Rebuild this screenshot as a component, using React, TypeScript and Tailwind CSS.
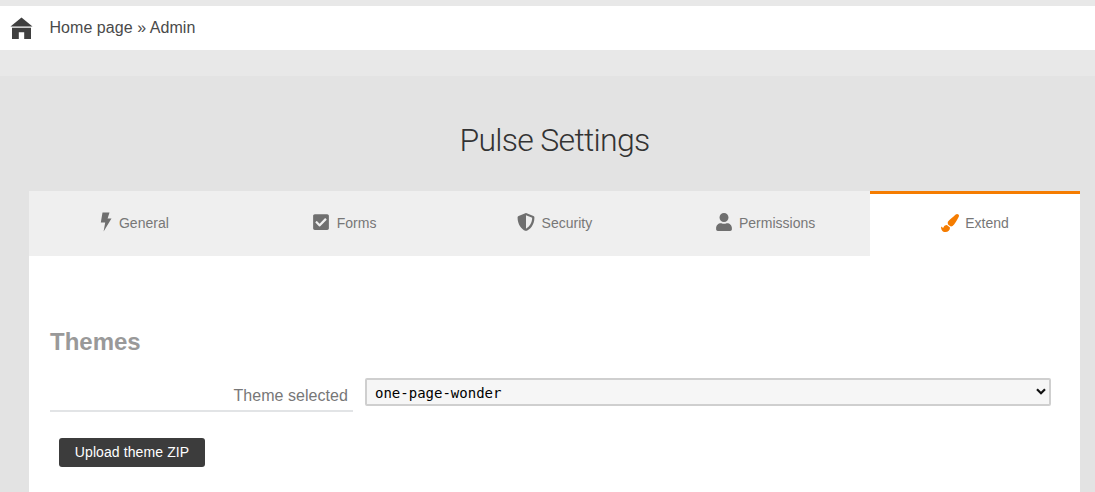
import React from "react";
import { FaCheckSquare, FaShieldAlt, FaUser, FaPaintBrush } from "react-icons/fa";

const Bolt = () => (
  <svg width="12" height="20" viewBox="0 0 12 20" className="mb-[4px] ml-[1px] text-[#6f6f6f]" fill="currentColor">
    <path d="M2.5 0.5H9.5L7.6 6.5H11.5L3.6 19.6L5.2 10.6H0.8Z" />
  </svg>
);

const tabs = [
  { label: "General", icon: <Bolt /> },
  { label: "Forms", icon: <FaCheckSquare className="mb-[4px] text-[18px] text-[#6f6f6f]" /> },
  { label: "Security", icon: <FaShieldAlt className="mb-[4px] text-[18px] text-[#6f6f6f]" /> },
  { label: "Permissions", icon: <FaUser className="mb-[4px] text-[18px] text-[#6f6f6f]" /> },
];

export default function App() {
  return (
    <div className="h-[492px] overflow-hidden bg-[#e8e8e8] text-[#777] font-['Liberation_Sans',Arial,sans-serif]">
      <div className="h-[6px]" />
      <div className="flex h-[44px] items-center bg-white pl-[10px]">
        <svg width="23" height="23" viewBox="0 0 23 23" fill="#3f3f3f" className="mt-[1px]">
          <path d="M11.5 0.5L22.5 9.5H0.5Z" />
          <path d="M2 10.8H21V22H14.2V15.2H8.8V22H2Z" />
        </svg>
        <span className="ml-[16.5px] text-[16px] tracking-[0.05px] text-[#4a4a4a]">Home page » Admin</span>
      </div>
      <div className="h-[26px]" />
      <div className="flex h-[416px] flex-col bg-[#e3e3e3] pl-[29px] pr-[15px]">
        <h1 className="flex h-[115px] items-center justify-center pt-[13px] font-['Roboto',sans-serif] text-[32px] font-light tracking-[-0.7px] text-[#333]">
          Pulse Settings
        </h1>
        <div className="flex h-[65px] w-[1051px] items-stretch bg-[#efefef]">
          {tabs.map((t) => (
            <div key={t.label} className="flex w-[210.25px] items-center justify-center gap-[6.5px] text-[14px] text-[#777]">
              {t.icon}
              <span>{t.label}</span>
            </div>
          ))}
          <div className="flex w-[210px] items-center justify-center gap-[6px] border-t-[3px] border-[#f57c00] bg-white pb-[3px] text-[14px] text-[#777]">
            <FaPaintBrush className="mb-[1px] text-[18px] text-[#f57c00]" />
            <span>Extend</span>
          </div>
        </div>
        <div className="w-[1051px] flex-1 bg-white pl-[21px] pr-[29px] pt-[72px]">
          <h2 className="text-[24px] font-bold leading-[28px] text-[#999]">Themes</h2>
          <div className="mt-[22px] flex items-start">
            <label className="flex h-[34px] w-[303px] items-center justify-end border-b-2 border-[#e2e4e6] pr-[5px] pt-[3px] text-[16px] tracking-[0.05px] text-[#777]">
              Theme selected
            </label>
            <div className="relative ml-[12px] flex-1">
              <select
                defaultValue="one-page-wonder"
                className="h-[28px] w-full appearance-none rounded-[2px] border-2 border-[#cfcfcf] bg-[#f6f6f6] pl-[8px] pt-[2px] font-['DejaVu_Sans_Mono',monospace] text-[14px] text-black"
              >
                <option>one-page-wonder</option>
              </select>
              <svg width="10" height="7" viewBox="0 0 10 7" className="pointer-events-none absolute right-[5px] top-[10px]" fill="none" stroke="#111" strokeWidth="2.2">
                <path d="M1 1.2L5 5.2L9 1.2" />
              </svg>
            </div>
          </div>
          <button className="ml-[9px] mt-[26px] h-[29px] w-[146px] rounded-[3px] bg-[#3c3c3c] text-[14px] tracking-[0.1px] text-white">
            Upload theme ZIP
          </button>
        </div>
      </div>
    </div>
  );
}
